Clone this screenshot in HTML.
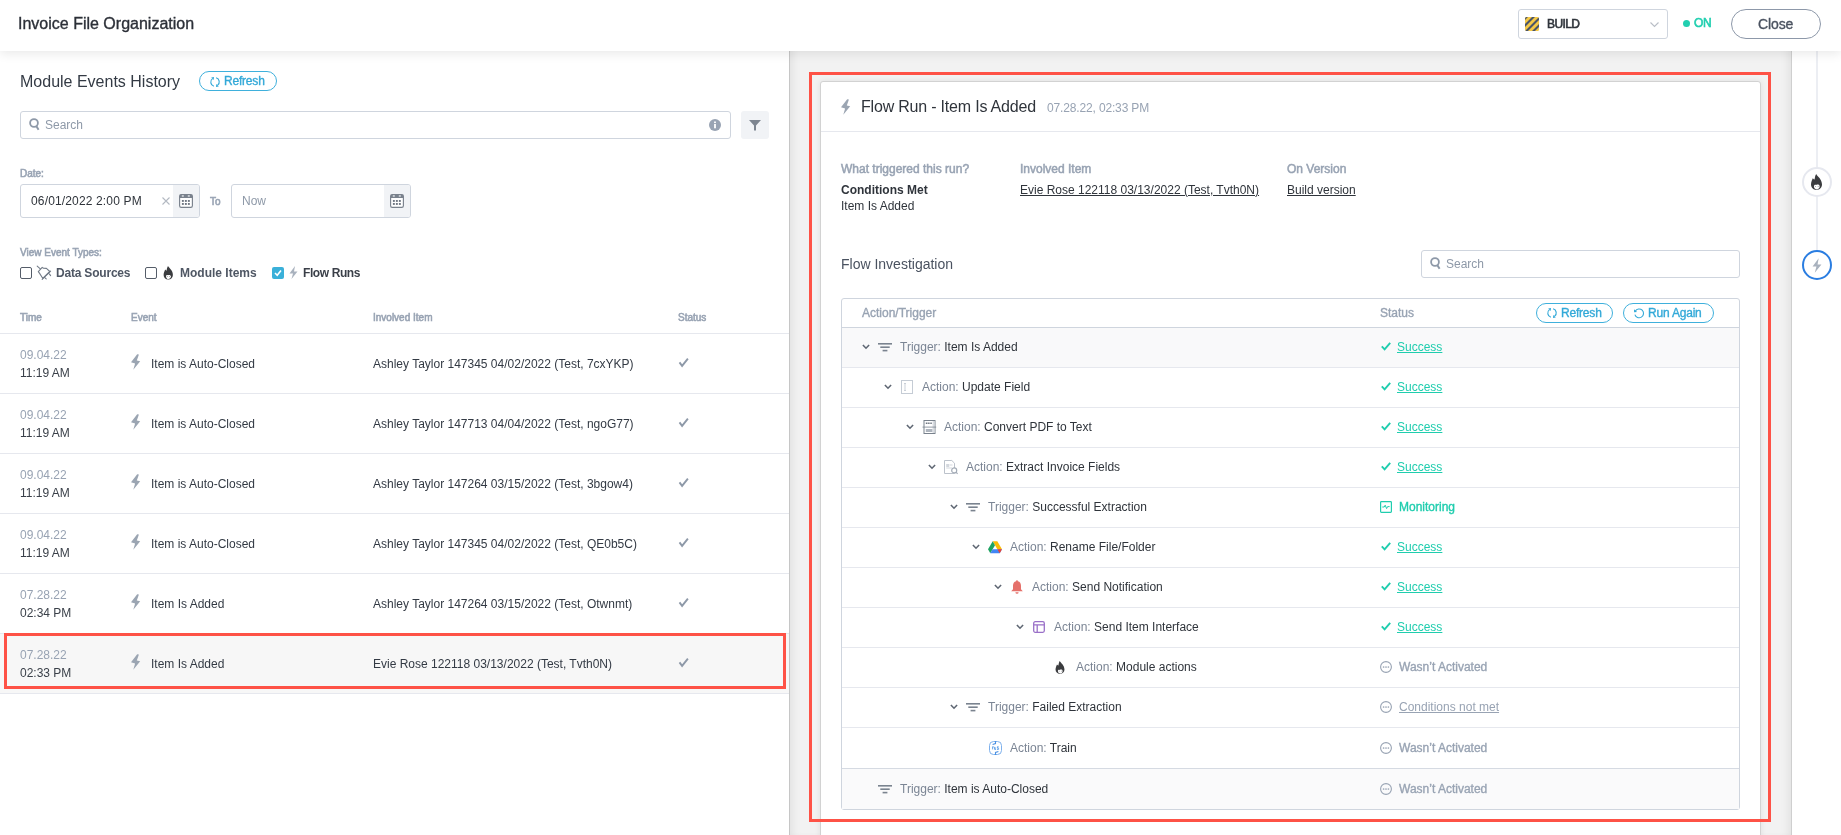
<!DOCTYPE html>
<html><head><meta charset="utf-8">
<style>
*{box-sizing:border-box;margin:0;padding:0}
html,body{width:1841px;height:835px;overflow:hidden;background:#fff;font-family:"Liberation Sans",sans-serif;color:#2f343b}
.a{position:absolute}
.t{position:absolute;white-space:nowrap;line-height:16px}
.f12{font-size:12px}
.f10{font-size:10px}
.med{-webkit-text-stroke:0.35px currentColor}
.f10.med{-webkit-text-stroke:0.55px currentColor}
.gray{color:#98a3b3}
svg{position:absolute;overflow:visible}
.hl{position:absolute;height:1px;background:#e6e8ee}
.t{will-change:transform}
</style></head><body>

<!-- LEFT PANEL -->
<div class="a" style="left:0;top:0;width:789px;height:835px;background:#fff"></div>
<div class="a" style="left:789px;top:0;width:1px;height:835px;background:#c6c6c6"></div>

<!-- GRAY PANEL -->
<div class="a" style="left:790px;top:0;width:1001px;height:835px;background:#f2f2f2;box-shadow:inset 8px 0 10px -6px rgba(0,0,0,0.08),inset -8px 0 10px -6px rgba(0,0,0,0.08)"></div>
<div class="a" style="left:1791px;top:0;width:1px;height:835px;background:#cfcfcf"></div>
<div class="a" style="left:1792px;top:0;width:49px;height:835px;background:#fff"></div>

<!-- HEADER -->
<div class="a" style="left:0;top:0;width:1841px;height:51px;background:#fff;box-shadow:0 3px 10px rgba(0,0,0,0.085);z-index:5">
  <div class="t med" style="left:18px;top:14px;font-size:16px;line-height:20px;color:#2c3038">Invoice File Organization</div>
  <!-- build dropdown -->
  <div class="a" style="left:1518px;top:9px;width:150px;height:30px;border:1px solid #cfd5de;border-radius:3px"></div>
  <svg style="left:1525px;top:17px" width="14" height="14" viewBox="0 0 14 14">
    <defs><clipPath id="cb"><rect width="14" height="14" rx="1.5"/></clipPath></defs>
    <g clip-path="url(#cb)"><rect width="14" height="14" fill="#f5c946"/>
    <path d="M-3 4.5L4.5 -3M-3 11.5L11.5 -3M-3 18.5L18.5 -3M-3 25.5L25.5 -3" stroke="#4a5568" stroke-width="2.1"/></g>
  </svg>
  <div class="t f12" style="left:1547px;top:16px;font-weight:400;-webkit-text-stroke:0.6px currentColor;letter-spacing:-0.6px;font-size:12px;color:#2f343b">BUILD</div>
  <svg style="left:1650px;top:22px" width="9" height="5" viewBox="0 0 9 5"><path d="M0.5 0.5L4.5 4.5L8.5 0.5" fill="none" stroke="#b9bec6" stroke-width="1.1"/></svg>
  <div class="a" style="left:1683px;top:20px;width:7px;height:7px;border-radius:50%;background:#22cfb0"></div>
  <div class="t" style="left:1694px;top:15px;font-size:12px;font-weight:400;-webkit-text-stroke:0.6px currentColor;letter-spacing:-0.4px;color:#22cfb0">ON</div>
  <div class="a" style="left:1731px;top:9px;width:90px;height:30px;border:1px solid #8d98a9;border-radius:15px"></div>
  <div class="t med" style="left:1758px;top:15px;font-size:14px;line-height:18px;color:#4a5260;letter-spacing:-0.1px">Close</div>
</div>

<!-- left panel content -->
<div class="t" style="left:20px;top:72px;font-size:16px;line-height:20px;color:#333a44">Module Events History</div>
<div class="a" style="left:199px;top:71px;width:78px;height:20px;border:1px solid #3fb0dc;border-radius:10px"></div>
<svg style="left:210px;top:77px" width="10" height="10" viewBox="0 0 10 10"><path d="M2.5 1.6A4.3 4.3 0 0 0 3.9 9.2M7.5 8.4A4.3 4.3 0 0 0 6.1 0.8" fill="none" stroke="#33a9d8" stroke-width="1.15"/><path d="M1.2 0.6L4.0 0L3.7 2.9Z M8.8 9.4L6.0 10L6.3 7.1Z" fill="#33a9d8"/></svg>
<div class="t f12 med" style="left:224px;top:73px;color:#33a9d8;letter-spacing:-0.2px">Refresh</div>

<!-- search -->
<div class="a" style="left:20px;top:111px;width:711px;height:28px;border:1px solid #cfd5de;border-radius:3px"></div>
<svg style="left:29px;top:118px" width="11" height="13" viewBox="0 0 11 13"><circle cx="5" cy="5" r="3.9" fill="none" stroke="#8e99a8" stroke-width="1.8"/><path d="M7.2 8L9.6 11.8" stroke="#8e99a8" stroke-width="2"/></svg>
<div class="t f12" style="left:45px;top:117px;color:#8e99a8">Search</div>
<svg style="left:709px;top:119px" width="12" height="12" viewBox="0 0 12 12"><circle cx="6" cy="6" r="6" fill="#98a3b3"/><rect x="5.1" y="5" width="1.8" height="4.3" fill="#fff"/><rect x="5.1" y="2.5" width="1.8" height="1.6" fill="#fff"/></svg>
<div class="a" style="left:741px;top:111px;width:28px;height:28px;background:#f1f3f6;border-radius:3px"></div>
<svg style="left:749px;top:120px" width="12" height="11" viewBox="0 0 12 11"><path d="M0 0H12L7 5.5V10.5H5V5.5Z" fill="#7d8590"/></svg>

<!-- date -->
<div class="t f10 med gray" style="left:20px;top:168px;line-height:12px">Date:</div>
<div class="a" style="left:20px;top:184px;width:180px;height:34px;border:1px solid #cfd5de;border-radius:3px;overflow:hidden">
  <div class="a" style="left:152px;top:0;width:28px;height:34px;background:#f1f3f6"></div>
</div>
<div class="t f12" style="left:31px;top:193px;color:#2f343b;letter-spacing:0.15px">06/01/2022 2:00 PM</div>
<svg style="left:162px;top:197px" width="8" height="8" viewBox="0 0 8 8"><path d="M0.5 0.5L7.5 7.5M7.5 0.5L0.5 7.5" stroke="#b3b9c2" stroke-width="1.1"/></svg>
<svg style="left:179px;top:194px" width="14" height="14" viewBox="0 0 14 14"><rect x="0.6" y="0.6" width="12.8" height="12.7" rx="1.6" fill="#fff" stroke="#7a828d" stroke-width="1.15"/><path d="M0.6 4V2.2A1.6 1.6 0 0 1 2.2 0.6H11.8A1.6 1.6 0 0 1 13.4 2.2V4Z" fill="#7a828d"/><rect x="2.8" y="1" width="2" height="1.9" fill="#c8ccd2"/><rect x="8.8" y="1" width="2" height="1.9" fill="#c8ccd2"/><g fill="#6f7782"><rect x="2.9" y="6" width="1.9" height="1.9"/><rect x="5.9" y="6" width="1.9" height="1.9"/><rect x="8.9" y="6" width="1.9" height="1.9"/><rect x="2.9" y="9" width="1.9" height="1.9"/><rect x="5.9" y="9" width="1.9" height="1.9"/><rect x="8.9" y="9" width="1.9" height="1.9"/></g></svg>
<div class="t f10 med gray" style="left:210px;top:196px;line-height:12px">To</div>
<div class="a" style="left:231px;top:184px;width:180px;height:34px;border:1px solid #cfd5de;border-radius:3px;overflow:hidden">
  <div class="a" style="left:152px;top:0;width:28px;height:34px;background:#f1f3f6"></div>
</div>
<div class="t f12" style="left:242px;top:193px;color:#8e99a8">Now</div>
<svg style="left:390px;top:194px" width="14" height="14" viewBox="0 0 14 14"><rect x="0.6" y="0.6" width="12.8" height="12.7" rx="1.6" fill="#fff" stroke="#7a828d" stroke-width="1.15"/><path d="M0.6 4V2.2A1.6 1.6 0 0 1 2.2 0.6H11.8A1.6 1.6 0 0 1 13.4 2.2V4Z" fill="#7a828d"/><rect x="2.8" y="1" width="2" height="1.9" fill="#c8ccd2"/><rect x="8.8" y="1" width="2" height="1.9" fill="#c8ccd2"/><g fill="#6f7782"><rect x="2.9" y="6" width="1.9" height="1.9"/><rect x="5.9" y="6" width="1.9" height="1.9"/><rect x="8.9" y="6" width="1.9" height="1.9"/><rect x="2.9" y="9" width="1.9" height="1.9"/><rect x="5.9" y="9" width="1.9" height="1.9"/><rect x="8.9" y="9" width="1.9" height="1.9"/></g></svg>

<!-- event types -->
<div class="t f10 med gray" style="left:20px;top:247px;line-height:12px">View Event Types:</div>
<div class="a" style="left:20px;top:267px;width:12px;height:12px;border:1.5px solid #555d69;border-radius:2px"></div>
<svg style="left:34px;top:262px" width="20" height="22" viewBox="0 0 20 22"><path d="M3.2 4.2L6.3 6.8M14.8 11.1L16.6 13.6M10.5 15.4L12.2 16.9M16.6 9.2L8.2 17.4" fill="none" stroke="#737c88" stroke-width="1.1" stroke-linecap="round"/><path d="M4.3 9.6L8.2 5.4L9.5 6.2L12.4 6.4L15.8 9.5L8.7 16.3L5.6 11.4Z" fill="none" stroke="#737c88" stroke-width="1.1" stroke-linejoin="round"/></svg>
<div class="t f12" style="left:56px;top:265px;font-weight:700;letter-spacing:-0.2px;color:#4f5764">Data Sources</div>
<div class="a" style="left:145px;top:267px;width:12px;height:12px;border:1.5px solid #555d69;border-radius:2px"></div>
<svg style="left:163px;top:266px" width="10.5" height="13.5" viewBox="0 0 11 16"><path d="M5.5 16C2.2 16 0 13.6 0 10.6C0 7.8 1.2 6 1.8 4.2C2.6 5 3 5.4 3.6 5.6C3.8 3.2 4.4 1.2 5.2 0C6.4 2.4 11 5 11 10.6C11 13.6 8.8 16 5.5 16Z" fill="#3b3c3f"/><path d="M2.9 12.3C2.9 10.8 4.2 10.2 5.2 11C6.3 10.2 8.7 10.4 8.7 12.5C8.7 14.2 7 15.3 5.7 15.4C4.1 15.3 2.9 14.1 2.9 12.3Z" fill="#fff"/><circle cx="4.4" cy="12.4" r="0.42" fill="#3b3c3f"/><circle cx="7.1" cy="12.4" r="0.42" fill="#3b3c3f"/></svg>
<div class="t f12" style="left:180px;top:265px;font-weight:700;color:#4f5764">Module Items</div>
<div class="a" style="left:272px;top:267px;width:12px;height:12px;background:#3ab0d9;border-radius:2px"></div>
<svg style="left:274px;top:269px" width="8" height="8" viewBox="0 0 8 8"><path d="M1 4L3.2 6.2L7 1.5" fill="none" stroke="#fff" stroke-width="1.6"/></svg>
<svg style="left:289px;top:266px" width="9" height="13" viewBox="0 0 9 13"><path d="M6 0L0.5 7.5H4L2.5 13L8.5 5.5H5Z" fill="#a9b2be"/></svg>
<div class="t f12" style="left:303px;top:265px;font-weight:700;color:#3a3f48;letter-spacing:-0.4px">Flow Runs</div>

<!-- table header -->
<div class="t f10 med gray" style="left:20px;top:312px;line-height:12px">Time</div>
<div class="t f10 med gray" style="left:131px;top:312px;line-height:12px">Event</div>
<div class="t f10 med gray" style="left:373px;top:312px;line-height:12px">Involved Item</div>
<div class="t f10 med gray" style="left:678px;top:312px;line-height:12px">Status</div>
<div class="hl" style="left:0;top:333px;width:789px"></div>

<div id="rows">
<div class="t f12" style="left:20px;top:347px;color:#98a3b3">09.04.22</div>
<div class="t f12" style="left:20px;top:365px;color:#3a4049">11:19 AM</div>
<svg style="left:131px;top:354px" width="10" height="16" viewBox="0 0 10 16"><path d="M6.2 0.2L7.9 0.4L5.8 6.5L9.2 7.3L2.3 15.8L4.1 9.4L0 8.3Z" fill="#9ba5b2"/></svg>
<div class="t f12" style="left:151px;top:356px;color:#333a44">Item is Auto-Closed</div>
<div class="t f12" style="left:373px;top:356px;color:#333a44">Ashley Taylor 147345 04/02/2022 (Test, 7cxYKP)</div>
<svg style="left:679px;top:358px" width="10" height="10" viewBox="0 0 10 10"><path d="M0.5 4.4L3.1 7.9L8.9 0.6" fill="none" stroke="#8e99a8" stroke-width="1.9"/></svg>
<div class="hl" style="left:0;top:393px;width:789px"></div>
<div class="t f12" style="left:20px;top:407px;color:#98a3b3">09.04.22</div>
<div class="t f12" style="left:20px;top:425px;color:#3a4049">11:19 AM</div>
<svg style="left:131px;top:414px" width="10" height="16" viewBox="0 0 10 16"><path d="M6.2 0.2L7.9 0.4L5.8 6.5L9.2 7.3L2.3 15.8L4.1 9.4L0 8.3Z" fill="#9ba5b2"/></svg>
<div class="t f12" style="left:151px;top:416px;color:#333a44">Item is Auto-Closed</div>
<div class="t f12" style="left:373px;top:416px;color:#333a44">Ashley Taylor 147713 04/04/2022 (Test, ngoG77)</div>
<svg style="left:679px;top:418px" width="10" height="10" viewBox="0 0 10 10"><path d="M0.5 4.4L3.1 7.9L8.9 0.6" fill="none" stroke="#8e99a8" stroke-width="1.9"/></svg>
<div class="hl" style="left:0;top:453px;width:789px"></div>
<div class="t f12" style="left:20px;top:467px;color:#98a3b3">09.04.22</div>
<div class="t f12" style="left:20px;top:485px;color:#3a4049">11:19 AM</div>
<svg style="left:131px;top:474px" width="10" height="16" viewBox="0 0 10 16"><path d="M6.2 0.2L7.9 0.4L5.8 6.5L9.2 7.3L2.3 15.8L4.1 9.4L0 8.3Z" fill="#9ba5b2"/></svg>
<div class="t f12" style="left:151px;top:476px;color:#333a44">Item is Auto-Closed</div>
<div class="t f12" style="left:373px;top:476px;color:#333a44">Ashley Taylor 147264 03/15/2022 (Test, 3bgow4)</div>
<svg style="left:679px;top:478px" width="10" height="10" viewBox="0 0 10 10"><path d="M0.5 4.4L3.1 7.9L8.9 0.6" fill="none" stroke="#8e99a8" stroke-width="1.9"/></svg>
<div class="hl" style="left:0;top:513px;width:789px"></div>
<div class="t f12" style="left:20px;top:527px;color:#98a3b3">09.04.22</div>
<div class="t f12" style="left:20px;top:545px;color:#3a4049">11:19 AM</div>
<svg style="left:131px;top:534px" width="10" height="16" viewBox="0 0 10 16"><path d="M6.2 0.2L7.9 0.4L5.8 6.5L9.2 7.3L2.3 15.8L4.1 9.4L0 8.3Z" fill="#9ba5b2"/></svg>
<div class="t f12" style="left:151px;top:536px;color:#333a44">Item is Auto-Closed</div>
<div class="t f12" style="left:373px;top:536px;color:#333a44">Ashley Taylor 147345 04/02/2022 (Test, QE0b5C)</div>
<svg style="left:679px;top:538px" width="10" height="10" viewBox="0 0 10 10"><path d="M0.5 4.4L3.1 7.9L8.9 0.6" fill="none" stroke="#8e99a8" stroke-width="1.9"/></svg>
<div class="hl" style="left:0;top:573px;width:789px"></div>
<div class="t f12" style="left:20px;top:587px;color:#98a3b3">07.28.22</div>
<div class="t f12" style="left:20px;top:605px;color:#3a4049">02:34 PM</div>
<svg style="left:131px;top:594px" width="10" height="16" viewBox="0 0 10 16"><path d="M6.2 0.2L7.9 0.4L5.8 6.5L9.2 7.3L2.3 15.8L4.1 9.4L0 8.3Z" fill="#9ba5b2"/></svg>
<div class="t f12" style="left:151px;top:596px;color:#333a44">Item Is Added</div>
<div class="t f12" style="left:373px;top:596px;color:#333a44">Ashley Taylor 147264 03/15/2022 (Test, Otwnmt)</div>
<svg style="left:679px;top:598px" width="10" height="10" viewBox="0 0 10 10"><path d="M0.5 4.4L3.1 7.9L8.9 0.6" fill="none" stroke="#8e99a8" stroke-width="1.9"/></svg>
<div class="hl" style="left:0;top:633px;width:789px"></div>
<div class="a" style="left:0;top:634px;width:789px;height:59px;background:#f7f7f7"></div>
<div class="t f12" style="left:20px;top:647px;color:#98a3b3">07.28.22</div>
<div class="t f12" style="left:20px;top:665px;color:#3a4049">02:33 PM</div>
<svg style="left:131px;top:654px" width="10" height="16" viewBox="0 0 10 16"><path d="M6.2 0.2L7.9 0.4L5.8 6.5L9.2 7.3L2.3 15.8L4.1 9.4L0 8.3Z" fill="#9ba5b2"/></svg>
<div class="t f12" style="left:151px;top:656px;color:#333a44">Item Is Added</div>
<div class="t f12" style="left:373px;top:656px;color:#333a44">Evie Rose 122118 03/13/2022 (Test, Tvth0N)</div>
<svg style="left:679px;top:658px" width="10" height="10" viewBox="0 0 10 10"><path d="M0.5 4.4L3.1 7.9L8.9 0.6" fill="none" stroke="#8e99a8" stroke-width="1.9"/></svg>
<div class="hl" style="left:0;top:693px;width:789px"></div>
</div>

<!-- RIGHT CARD -->
<div class="a" style="left:820px;top:81px;width:941px;height:770px;background:#fff;border:1px solid #d2d2d2;border-radius:3px;box-shadow:0 0 6px rgba(0,0,0,0.08)"></div>
<div class="hl" style="left:821px;top:131px;width:939px;background:#e6e8ee"></div>

<div id="right">
<svg style="left:841px;top:99px" width="10" height="16" viewBox="0 0 10 16"><path d="M6.2 0.2L7.9 0.4L5.8 6.5L9.2 7.3L2.3 15.8L4.1 9.4L0 8.3Z" fill="#9ba5b2"/></svg>
<div class="t" style="left:861px;top:97px;font-size:16px;line-height:20px;color:#2f343b;letter-spacing:-0.2px">Flow Run - Item Is Added</div>
<div class="t f12" style="left:1047px;top:100px;color:#98a3b3;letter-spacing:-0.15px">07.28.22, 02:33 PM</div>
<div class="t f12 gray" style="left:841px;top:161px;-webkit-text-stroke:0.5px currentColor">What triggered this run?</div>
<div class="t f12 gray" style="left:1020px;top:161px;-webkit-text-stroke:0.5px currentColor">Involved Item</div>
<div class="t f12 gray" style="left:1287px;top:161px;-webkit-text-stroke:0.5px currentColor">On Version</div>
<div class="t f12" style="left:841px;top:182px;font-weight:700;color:#2f343b">Conditions Met</div>
<div class="t f12" style="left:841px;top:198px;color:#2f343b">Item Is Added</div>
<div class="t f12" style="left:1020px;top:182px;color:#2f343b;text-decoration:underline">Evie Rose 122118 03/13/2022 (Test, Tvth0N)</div>
<div class="t f12" style="left:1287px;top:182px;color:#2f343b;text-decoration:underline">Build version</div>
<div class="t" style="left:841px;top:255px;font-size:14px;line-height:18px;color:#4a5260">Flow Investigation</div>
<div class="a" style="left:1421px;top:250px;width:319px;height:28px;border:1px solid #cfd5de;border-radius:3px"></div>
<svg style="left:1430px;top:257px" width="11" height="13" viewBox="0 0 11 13"><circle cx="5" cy="5" r="3.9" fill="none" stroke="#8e99a8" stroke-width="1.8"/><path d="M7.2 8L9.6 11.8" stroke="#8e99a8" stroke-width="2"/></svg>
<div class="t f12" style="left:1446px;top:256px;color:#8e99a8">Search</div>
<div class="a" style="left:841px;top:298px;width:899px;height:512px;border:1px solid #cfd5de;border-radius:3px;overflow:hidden">
</div>
<div class="t f12 med gray" style="left:862px;top:305px">Action/Trigger</div>
<div class="t f12 med gray" style="left:1380px;top:305px">Status</div>
<div class="a" style="left:1536px;top:303px;width:77px;height:20px;border:1px solid #3fb0dc;border-radius:10px"></div>
<svg style="left:1547px;top:308px" width="10" height="10" viewBox="0 0 10 10"><path d="M2.5 1.6A4.3 4.3 0 0 0 3.9 9.2M7.5 8.4A4.3 4.3 0 0 0 6.1 0.8" fill="none" stroke="#33a9d8" stroke-width="1.15"/><path d="M1.2 0.6L4.0 0L3.7 2.9Z M8.8 9.4L6.0 10L6.3 7.1Z" fill="#33a9d8"/></svg>
<div class="t f12 med" style="left:1561px;top:305px;color:#33a9d8;letter-spacing:-0.2px">Refresh</div>
<div class="a" style="left:1623px;top:303px;width:91px;height:20px;border:1px solid #3fb0dc;border-radius:10px"></div>
<svg style="left:1634px;top:308px" width="10" height="10" viewBox="0 0 10 10"><path d="M1.3 3.2A4.4 4.4 0 1 1 0.9 6.6" fill="none" stroke="#33a9d8" stroke-width="1.1"/><path d="M0 1.3L0.1 4.3L3.1 3.9Z" fill="#33a9d8"/></svg>
<div class="t f12 med" style="left:1648px;top:305px;color:#33a9d8;letter-spacing:-0.2px">Run Again</div>
<div class="a" style="left:842px;top:328px;width:897px;height:39px;background:#f9f9fa"></div>
<svg style="left:862px;top:344px" width="8" height="6" viewBox="0 0 8 6"><path d="M0.9 1L4 4.2L7.1 1" fill="none" stroke="#5f6773" stroke-width="1.6"/></svg>
<svg style="left:878px;top:343px" width="14" height="9" viewBox="0 0 14 9"><rect x="0" y="0" width="14" height="1.6" fill="#7a838f"/><rect x="2.3" y="3.4" width="9.4" height="1.6" fill="#7a838f"/><rect x="4.6" y="6.8" width="4.8" height="1.6" fill="#7a838f"/></svg>
<div class="t f12" style="left:900px;top:339px;color:#7b8594">Trigger: <span style="color:#2f343b">Item Is Added</span></div>
<svg style="left:1381px;top:342px" width="10" height="9" viewBox="0 0 10 9"><path d="M0.8 4.4L3.6 7.3L9.2 0.8" fill="none" stroke="#1fcdae" stroke-width="1.9"/></svg>
<div class="t f12" style="left:1397px;top:339px;color:#1fcdae;text-decoration:underline">Success</div>
<div class="hl" style="left:842px;top:367px;width:897px;background:#e6e8ee"></div>
<svg style="left:884px;top:384px" width="8" height="6" viewBox="0 0 8 6"><path d="M0.9 1L4 4.2L7.1 1" fill="none" stroke="#5f6773" stroke-width="1.6"/></svg>
<svg style="left:901px;top:380px" width="12" height="14" viewBox="0 0 12 14"><rect x="0.5" y="0.5" width="11" height="13" fill="none" stroke="#c5ccd5" stroke-width="1"/><path d="M3 3.5H5M4 3.5V10.5M3 10.5H5" stroke="#c5ccd5" stroke-width="0.9"/></svg>
<div class="t f12" style="left:922px;top:379px;color:#7b8594">Action: <span style="color:#2f343b">Update Field</span></div>
<svg style="left:1381px;top:382px" width="10" height="9" viewBox="0 0 10 9"><path d="M0.8 4.4L3.6 7.3L9.2 0.8" fill="none" stroke="#1fcdae" stroke-width="1.9"/></svg>
<div class="t f12" style="left:1397px;top:379px;color:#1fcdae;text-decoration:underline">Success</div>
<div class="hl" style="left:842px;top:407px;width:897px;background:#e6e8ee"></div>
<svg style="left:906px;top:424px" width="8" height="6" viewBox="0 0 8 6"><path d="M0.9 1L4 4.2L7.1 1" fill="none" stroke="#5f6773" stroke-width="1.6"/></svg>
<svg style="left:923px;top:420px" width="13" height="14" viewBox="0 0 13 14"><rect x="1" y="0.5" width="11" height="13" fill="#fff" stroke="#78818c" stroke-width="1"/><rect x="9.6" y="1" width="1.9" height="12" fill="#d9dde2"/><path d="M2.8 3.3H9" stroke="#6f7782" stroke-width="1.5" stroke-dasharray="1.3 0.5"/><path d="M-0.5 7.1H13.2" stroke="#7a838f" stroke-width="0.8"/><rect x="2.8" y="9" width="6.6" height="3" fill="#aeb5be"/></svg>
<div class="t f12" style="left:944px;top:419px;color:#7b8594">Action: <span style="color:#2f343b">Convert PDF to Text</span></div>
<svg style="left:1381px;top:422px" width="10" height="9" viewBox="0 0 10 9"><path d="M0.8 4.4L3.6 7.3L9.2 0.8" fill="none" stroke="#1fcdae" stroke-width="1.9"/></svg>
<div class="t f12" style="left:1397px;top:419px;color:#1fcdae;text-decoration:underline">Success</div>
<div class="hl" style="left:842px;top:447px;width:897px;background:#e6e8ee"></div>
<svg style="left:928px;top:464px" width="8" height="6" viewBox="0 0 8 6"><path d="M0.9 1L4 4.2L7.1 1" fill="none" stroke="#5f6773" stroke-width="1.6"/></svg>
<svg style="left:944px;top:460px" width="14" height="14" viewBox="0 0 14 14"><path d="M0.5 0.5H7.8L10.5 3.2V13.5H0.5Z" fill="#fff" stroke="#bcc2cb" stroke-width="1"/><rect x="2.2" y="4" width="3" height="3" fill="#d3d7dd"/><path d="M5.5 5H8.5M2.2 8H8" stroke="#d3d7dd" stroke-width="1.2"/><circle cx="10.2" cy="10.4" r="2.5" fill="#fff" stroke="#a3abb6" stroke-width="1.2"/><path d="M12 12.2L13.6 13.8" stroke="#a3abb6" stroke-width="1.2"/></svg>
<div class="t f12" style="left:966px;top:459px;color:#7b8594">Action: <span style="color:#2f343b">Extract Invoice Fields</span></div>
<svg style="left:1381px;top:462px" width="10" height="9" viewBox="0 0 10 9"><path d="M0.8 4.4L3.6 7.3L9.2 0.8" fill="none" stroke="#1fcdae" stroke-width="1.9"/></svg>
<div class="t f12" style="left:1397px;top:459px;color:#1fcdae;text-decoration:underline">Success</div>
<div class="hl" style="left:842px;top:487px;width:897px;background:#e6e8ee"></div>
<svg style="left:950px;top:504px" width="8" height="6" viewBox="0 0 8 6"><path d="M0.9 1L4 4.2L7.1 1" fill="none" stroke="#5f6773" stroke-width="1.6"/></svg>
<svg style="left:966px;top:503px" width="14" height="9" viewBox="0 0 14 9"><rect x="0" y="0" width="14" height="1.6" fill="#7a838f"/><rect x="2.3" y="3.4" width="9.4" height="1.6" fill="#7a838f"/><rect x="4.6" y="6.8" width="4.8" height="1.6" fill="#7a838f"/></svg>
<div class="t f12" style="left:988px;top:499px;color:#7b8594">Trigger: <span style="color:#2f343b">Successful Extraction</span></div>
<svg style="left:1380px;top:501px" width="12" height="12" viewBox="0 0 12 12"><rect x="0.6" y="0.6" width="10.8" height="10.8" rx="0.8" fill="none" stroke="#1fcdae" stroke-width="1.2"/><path d="M2.3 6H4.2L5.2 4.2L6.6 7.6L7.6 5.6H9.6" fill="none" stroke="#1fcdae" stroke-width="1"/></svg>
<div class="t f12 med" style="left:1399px;top:499px;color:#1fcdae">Monitoring</div>
<div class="hl" style="left:842px;top:527px;width:897px;background:#e6e8ee"></div>
<svg style="left:972px;top:544px" width="8" height="6" viewBox="0 0 8 6"><path d="M0.9 1L4 4.2L7.1 1" fill="none" stroke="#5f6773" stroke-width="1.6"/></svg>
<svg style="left:988px;top:541px" width="14" height="13" viewBox="0 0 14 12.5"><path d="M4.7 0H9.3L14 8.1H9.4Z" fill="#fbbc04"/><path d="M4.7 0L0 8.1L2.3 12.1L7 4Z" fill="#1ea362"/><path d="M2.3 12.1H11.7L14 8.1H4.6Z" fill="#4285f4"/><path d="M11.7 12.1L14 8.1H9.4Z" fill="#ea4335"/><path d="M4.7 0H7L9.3 4H7Z" fill="#1f9d55" opacity="0"/></svg>
<div class="t f12" style="left:1010px;top:539px;color:#7b8594">Action: <span style="color:#2f343b">Rename File/Folder</span></div>
<svg style="left:1381px;top:542px" width="10" height="9" viewBox="0 0 10 9"><path d="M0.8 4.4L3.6 7.3L9.2 0.8" fill="none" stroke="#1fcdae" stroke-width="1.9"/></svg>
<div class="t f12" style="left:1397px;top:539px;color:#1fcdae;text-decoration:underline">Success</div>
<div class="hl" style="left:842px;top:567px;width:897px;background:#e6e8ee"></div>
<svg style="left:994px;top:584px" width="8" height="6" viewBox="0 0 8 6"><path d="M0.9 1L4 4.2L7.1 1" fill="none" stroke="#5f6773" stroke-width="1.6"/></svg>
<svg style="left:1011px;top:580px" width="12" height="14" viewBox="0 0 12 14"><path d="M6 0.3C6.6 0.3 6.9 0.8 6.9 1.3C9 1.8 10 3.5 10 5.8V9.3L11.8 11.3H0.2L2 9.3V5.8C2 3.5 3 1.8 5.1 1.3C5.1 0.8 5.4 0.3 6 0.3Z" fill="#e5706a"/><path d="M4.4 12.2H7.6A1.6 1.6 0 0 1 4.4 12.2Z" fill="#e5706a"/></svg>
<div class="t f12" style="left:1032px;top:579px;color:#7b8594">Action: <span style="color:#2f343b">Send Notification</span></div>
<svg style="left:1381px;top:582px" width="10" height="9" viewBox="0 0 10 9"><path d="M0.8 4.4L3.6 7.3L9.2 0.8" fill="none" stroke="#1fcdae" stroke-width="1.9"/></svg>
<div class="t f12" style="left:1397px;top:579px;color:#1fcdae;text-decoration:underline">Success</div>
<div class="hl" style="left:842px;top:607px;width:897px;background:#e6e8ee"></div>
<svg style="left:1016px;top:624px" width="8" height="6" viewBox="0 0 8 6"><path d="M0.9 1L4 4.2L7.1 1" fill="none" stroke="#5f6773" stroke-width="1.6"/></svg>
<svg style="left:1033px;top:621px" width="12" height="12" viewBox="0 0 12 12"><rect x="0.7" y="0.7" width="10.6" height="10.6" rx="1.5" fill="none" stroke="#9a70c8" stroke-width="1.3"/><path d="M0.7 3.8H11.3M4.2 3.8V11.3" stroke="#9a70c8" stroke-width="1.3"/></svg>
<div class="t f12" style="left:1054px;top:619px;color:#7b8594">Action: <span style="color:#2f343b">Send Item Interface</span></div>
<svg style="left:1381px;top:622px" width="10" height="9" viewBox="0 0 10 9"><path d="M0.8 4.4L3.6 7.3L9.2 0.8" fill="none" stroke="#1fcdae" stroke-width="1.9"/></svg>
<div class="t f12" style="left:1397px;top:619px;color:#1fcdae;text-decoration:underline">Success</div>
<div class="hl" style="left:842px;top:647px;width:897px;background:#e6e8ee"></div>
<svg style="left:1055px;top:661px" width="10" height="13" viewBox="0 0 11 16"><path d="M5.5 16C2.2 16 0 13.6 0 10.6C0 7.8 1.2 6 1.8 4.2C2.6 5 3 5.4 3.6 5.6C3.8 3.2 4.4 1.2 5.2 0C6.4 2.4 11 5 11 10.6C11 13.6 8.8 16 5.5 16Z" fill="#3b3c3f"/><path d="M2.9 12.3C2.9 10.8 4.2 10.2 5.2 11C6.3 10.2 8.7 10.4 8.7 12.5C8.7 14.2 7 15.3 5.7 15.4C4.1 15.3 2.9 14.1 2.9 12.3Z" fill="#fff"/><circle cx="4.4" cy="12.4" r="0.42" fill="#3b3c3f"/><circle cx="7.1" cy="12.4" r="0.42" fill="#3b3c3f"/></svg>
<div class="t f12" style="left:1076px;top:659px;color:#7b8594">Action: <span style="color:#2f343b">Module actions</span></div>
<svg style="left:1380px;top:661px" width="12" height="12" viewBox="0 0 12 12"><circle cx="6" cy="6" r="5.4" fill="none" stroke="#98a3b3" stroke-width="1.1"/><circle cx="3.6" cy="6" r="0.85" fill="#98a3b3"/><circle cx="6" cy="6" r="0.85" fill="#98a3b3"/><circle cx="8.4" cy="6" r="0.85" fill="#98a3b3"/></svg>
<div class="t f12 med" style="left:1399px;top:659px;color:#98a3b3">Wasn&#8217;t Activated</div>
<div class="hl" style="left:842px;top:687px;width:897px;background:#e6e8ee"></div>
<svg style="left:950px;top:704px" width="8" height="6" viewBox="0 0 8 6"><path d="M0.9 1L4 4.2L7.1 1" fill="none" stroke="#5f6773" stroke-width="1.6"/></svg>
<svg style="left:966px;top:703px" width="14" height="9" viewBox="0 0 14 9"><rect x="0" y="0" width="14" height="1.6" fill="#7a838f"/><rect x="2.3" y="3.4" width="9.4" height="1.6" fill="#7a838f"/><rect x="4.6" y="6.8" width="4.8" height="1.6" fill="#7a838f"/></svg>
<div class="t f12" style="left:988px;top:699px;color:#7b8594">Trigger: <span style="color:#2f343b">Failed Extraction</span></div>
<svg style="left:1380px;top:701px" width="12" height="12" viewBox="0 0 12 12"><circle cx="6" cy="6" r="5.4" fill="none" stroke="#98a3b3" stroke-width="1.1"/><circle cx="3.6" cy="6" r="0.85" fill="#98a3b3"/><circle cx="6" cy="6" r="0.85" fill="#98a3b3"/><circle cx="8.4" cy="6" r="0.85" fill="#98a3b3"/></svg>
<div class="t f12" style="left:1399px;top:699px;color:#98a3b3;text-decoration:underline">Conditions not met</div>
<div class="hl" style="left:842px;top:727px;width:897px;background:#e6e8ee"></div>
<svg style="left:989px;top:741px" width="13" height="14" viewBox="0 0 13 14"><rect x="0.5" y="0.5" width="12" height="13" rx="4" fill="none" stroke="#7db0ec" stroke-width="1"/><path d="M6.5 0V2.6L3.6 3.6M6.5 14V11.4L9.4 10.4" fill="none" stroke="#4a90e2" stroke-width="1.1"/><path d="M3.2 5.9H4.9M3.6 5.9V8.4M5.6 5.9V8.4H7.1M5.6 7.1H7M8 5.9H9.8M8.4 5.9V7.2H9.6V8.4H8" fill="none" stroke="#5b9ee8" stroke-width="0.9"/></svg>
<div class="t f12" style="left:1010px;top:740px;color:#7b8594">Action: <span style="color:#2f343b">Train</span></div>
<svg style="left:1380px;top:742px" width="12" height="12" viewBox="0 0 12 12"><circle cx="6" cy="6" r="5.4" fill="none" stroke="#98a3b3" stroke-width="1.1"/><circle cx="3.6" cy="6" r="0.85" fill="#98a3b3"/><circle cx="6" cy="6" r="0.85" fill="#98a3b3"/><circle cx="8.4" cy="6" r="0.85" fill="#98a3b3"/></svg>
<div class="t f12 med" style="left:1399px;top:740px;color:#98a3b3">Wasn&#8217;t Activated</div>
<div class="hl" style="left:842px;top:768px;width:897px;background:#d5dae2"></div>
<div class="a" style="left:842px;top:769px;width:897px;height:40px;background:#fafafb"></div>
<svg style="left:878px;top:785px" width="14" height="9" viewBox="0 0 14 9"><rect x="0" y="0" width="14" height="1.6" fill="#7a838f"/><rect x="2.3" y="3.4" width="9.4" height="1.6" fill="#7a838f"/><rect x="4.6" y="6.8" width="4.8" height="1.6" fill="#7a838f"/></svg>
<div class="t f12" style="left:900px;top:781px;color:#7b8594">Trigger: <span style="color:#2f343b">Item is Auto-Closed</span></div>
<svg style="left:1380px;top:783px" width="12" height="12" viewBox="0 0 12 12"><circle cx="6" cy="6" r="5.4" fill="none" stroke="#98a3b3" stroke-width="1.1"/><circle cx="3.6" cy="6" r="0.85" fill="#98a3b3"/><circle cx="6" cy="6" r="0.85" fill="#98a3b3"/><circle cx="8.4" cy="6" r="0.85" fill="#98a3b3"/></svg>
<div class="t f12 med" style="left:1399px;top:781px;color:#98a3b3">Wasn&#8217;t Activated</div>
<div class="hl" style="left:842px;top:327px;width:897px;background:#cfd5de"></div>
</div>

<!-- timeline -->
<div class="a" style="left:1816px;top:51px;width:2px;height:200px;background:#eceef3"></div>
<div class="a" style="left:1802px;top:167px;width:30px;height:30px;border-radius:50%;border:2px solid #e6e8ef;background:#fff"></div>
<svg style="left:1811px;top:174px" width="11" height="16" viewBox="0 0 11 16"><path d="M5.5 16C2.2 16 0 13.6 0 10.6C0 7.8 1.2 6 1.8 4.2C2.6 5 3 5.4 3.6 5.6C3.8 3.2 4.4 1.2 5.2 0C6.4 2.4 11 5 11 10.6C11 13.6 8.8 16 5.5 16Z" fill="#3b3c3f"/><path d="M2.9 12.3C2.9 10.8 4.2 10.2 5.2 11C6.3 10.2 8.7 10.4 8.7 12.5C8.7 14.2 7 15.3 5.7 15.4C4.1 15.3 2.9 14.1 2.9 12.3Z" fill="#fff"/><circle cx="4.4" cy="12.4" r="0.42" fill="#3b3c3f"/><circle cx="7.1" cy="12.4" r="0.42" fill="#3b3c3f"/></svg>
<div class="a" style="left:1802px;top:250px;width:30px;height:30px;border-radius:50%;border:2px solid #2a7de1;background:#fff"></div>
<svg style="left:1812px;top:258px" width="10" height="15" viewBox="0 0 9 13"><path d="M6 0L0.5 7.5H4L2.5 13L8.5 5.5H5Z" fill="#a9b2be"/></svg>

<!-- RED BOXES -->
<div class="a" style="left:809px;top:72px;width:962px;height:750px;border:3px solid #fe5246;z-index:10"></div>
<div class="a" style="left:4px;top:633px;width:782px;height:56px;border:3px solid #fe5246;z-index:10"></div>

</body></html>
